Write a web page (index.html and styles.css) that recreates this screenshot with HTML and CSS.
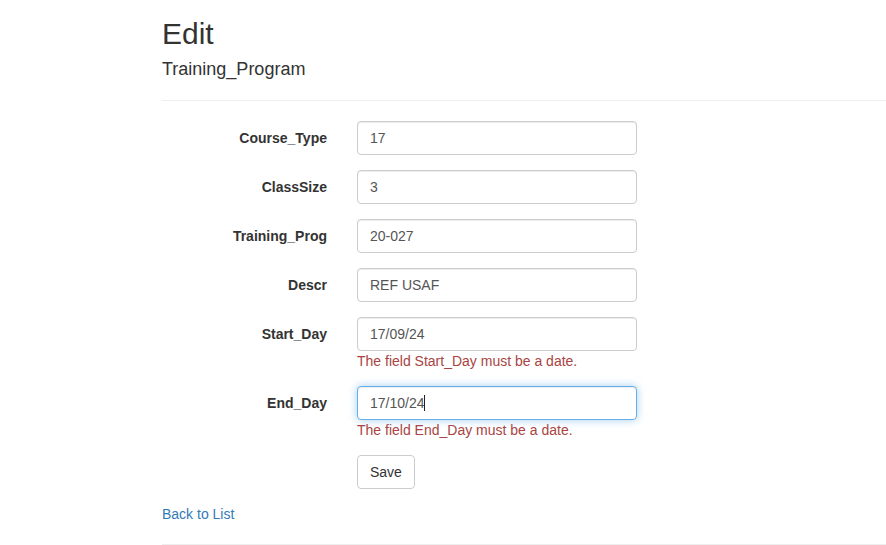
FILE: index.html
```html
<!DOCTYPE html>
<html>
<head>
<meta charset="utf-8">
<title>Edit</title>
<link rel="stylesheet" href="styles.css">
</head>
<body>
<div class="page">
  <h2 class="title">Edit</h2>
  <form class="form-horizontal">
    <h4 class="subtitle">Training_Program</h4>
    <hr class="rule">
    <div class="form-group">
      <label class="control-label">Course_Type</label>
      <div class="field"><input class="form-control" type="text" value="17"></div>
    </div>
    <div class="form-group">
      <label class="control-label">ClassSize</label>
      <div class="field"><input class="form-control" type="text" value="3"></div>
    </div>
    <div class="form-group">
      <label class="control-label">Training_Prog</label>
      <div class="field"><input class="form-control" type="text" value="20-027"></div>
    </div>
    <div class="form-group">
      <label class="control-label">Descr</label>
      <div class="field"><input class="form-control" type="text" value="REF USAF"></div>
    </div>
    <div class="form-group">
      <label class="control-label">Start_Day</label>
      <div class="field">
        <input class="form-control" type="text" value="17/09/24">
        <span class="text-danger">The field Start_Day must be a date.</span>
      </div>
    </div>
    <div class="form-group">
      <label class="control-label">End_Day</label>
      <div class="field">
        <div class="input-wrap">
          <input class="form-control is-focused" type="text" value="17/10/24">
          <span class="caret-line"></span>
        </div>
        <span class="text-danger">The field End_Day must be a date.</span>
      </div>
    </div>
    <div class="form-group">
      <div class="control-label"></div>
      <div class="field"><button type="button" class="btn">Save</button></div>
    </div>
  </form>
  <div class="back"><a class="link" href="#">Back to List</a></div>
  <hr class="rule footer-rule">
</div>
</body>
</html>
```
FILE: styles.css
```css
html, body {
  margin: 0;
  padding: 0;
  background: #fff;
}
body {
  font-family: "Liberation Sans", Arial, Helvetica, sans-serif;
  font-size: 14px;
  line-height: 1.42857143;
  color: #333;
}
.page {
  padding: 17px 0 0 162px;
}
.title {
  margin: 0 0 10px 0;
  font-size: 30px;
  font-weight: 500;
  line-height: 1.1;
}
.form-horizontal {
  margin: 0;
}
.subtitle {
  margin: 10px 0 10px 0;
  font-size: 18px;
  font-weight: 500;
  line-height: 1.1;
}
.rule {
  margin: 20px 0;
  border: 0;
  border-top: 1px solid #eee;
  height: 0;
}
.form-group {
  display: flex;
  gap: 30px;
  margin-bottom: 15px;
}
.control-label {
  width: 165px;
  flex: none;
  text-align: right;
  padding-top: 7px;
  font-weight: bold;
  margin: 0;
}
.field {
  display: flex;
  flex-direction: column;
  align-items: flex-start;
}
.input-wrap {
  position: relative;
}
.form-control {
  display: block;
  box-sizing: border-box;
  width: 280px;
  height: 34px;
  padding: 6px 12px;
  margin: 0;
  font-family: inherit;
  font-size: 14px;
  line-height: 1.42857143;
  color: #555;
  background: #fff;
  border: 1px solid #ccc;
  border-radius: 4px;
  box-shadow: inset 0 1px 1px rgba(0,0,0,.075);
  outline: none;
}
.form-control.is-focused {
  border-color: #66afe9;
  box-shadow: inset 0 1px 1px rgba(0,0,0,.075), 0 0 8px rgba(102,175,233,.6);
}
.caret-line {
  position: absolute;
  left: 67px;
  top: 9px;
  width: 1px;
  height: 16px;
  background: #222;
}
.text-danger {
  display: block;
  color: #a94442;
  line-height: 20px;
}
.btn {
  display: inline-block;
  box-sizing: border-box;
  height: 34px;
  padding: 6px 12px;
  font-family: inherit;
  font-size: 14px;
  line-height: 1.42857143;
  color: #333;
  background: #fff;
  border: 1px solid #ccc;
  border-radius: 4px;
  cursor: pointer;
}
.back {
  line-height: 20px;
}
.link {
  color: #337ab7;
  text-decoration: none;
}
.footer-rule {
  margin-bottom: 0;
}
```
